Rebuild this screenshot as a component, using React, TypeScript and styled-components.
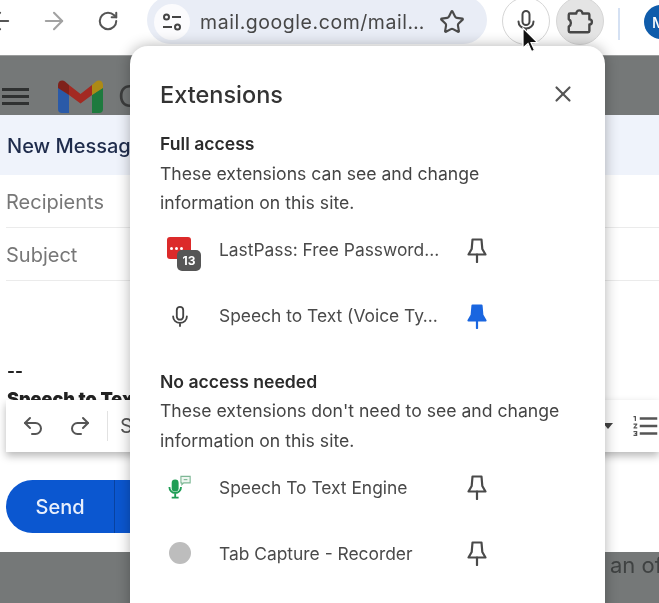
import React from 'react';
import styled, { createGlobalStyle } from 'styled-components';
import { ArrowLeft, ArrowRight, EllipsisVertical, Redo2, RotateCw, Star, Undo2, X } from 'lucide-react';
import { MdFormatListNumbered } from 'react-icons/md';

const GlobalStyle = createGlobalStyle`
    html, body {
        margin: 0;
        padding: 0;
        background: #fff;
    }

    body {
        font-family: Inter, "Liberation Sans", sans-serif;
        color: #444;
    }
`;

const Frame = styled.div`
    position: relative;
    display: flex;
    flex-direction: column;
    width: 659px;
    height: 603px;
    overflow: hidden;
    filter: blur(0.4px);
`;

const Toolbar = styled.header`
    display: flex;
    align-items: flex-start;
    flex: 0 0 56px;
    background: #fff;
    overflow: hidden;
`;

const NavButton = styled.span<{ $dim?: boolean; $width: number }>`
    display: flex;
    align-items: center;
    justify-content: center;
    flex: 0 0 ${(p) => p.$width}px;
    height: 42px;
    color: ${(p) => (p.$dim ? '#a2a2a2' : '#555')};
`;

const BackArrow = styled(ArrowLeft)`
    flex-shrink: 0;
    margin-left: -14px;
`;

const Omnibox = styled.div`
    display: flex;
    align-items: center;
    flex: 0 0 340px;
    height: 48px;
    margin-top: -4px;
    border-radius: 24px;
    background: #e9edf6;
`;

const TuneChip = styled.span`
    display: flex;
    align-items: center;
    justify-content: center;
    flex: 0 0 36px;
    height: 36px;
    margin: 4px 10px 0 7px;
    border-radius: 50%;
    background: #fbfbfd;
    color: #444;
`;

const Url = styled.span`
    flex: 1;
    margin-top: 4px;
    font-size: 19.5px;
    letter-spacing: 0.55px;
    color: #474747;
    white-space: nowrap;
`;

const StarSlot = styled.span`
    display: flex;
    margin: 4px 22px 0 0;
    color: #4a4a4a;
`;

const RoundAction = styled.span<{ $active?: boolean }>`
    display: flex;
    align-items: center;
    justify-content: center;
    flex: 0 0 48px;
    height: 48px;
    margin: -3px 0 0;
    border-radius: 50%;
    box-sizing: border-box;
    border: 1px solid #d6d6d6;
    background: ${(p) => (p.$active ? '#e4e4e4' : '#fff')};
    color: #474747;
`;

const ActionGap = styled.span<{ $width: number }>`
    flex: 0 0 ${(p) => p.$width}px;
`;

const ToolbarDivider = styled.span`
    flex: 0 0 2px;
    height: 32px;
    margin: 8px 24px 0 14px;
    background: #d5e1f3;
`;

const Avatar = styled.span`
    display: flex;
    align-items: center;
    padding-left: 8px;
    flex: 0 0 34px;
    height: 34px;
    margin-top: 5px;
    border-radius: 50%;
    background: #0f5cab;
    color: #fff;
    font-size: 15px;
    font-weight: 500;
    box-sizing: border-box;
`;

const PageScrim = styled.main`
    display: flex;
    flex-direction: column;
    flex: 1;
    background: #757878;
    border-top: 1px solid #9a9c9c;
    margin-top: -1px;
`;

const GmailBar = styled.div`
    display: flex;
    align-items: center;
    flex: 0 0 59px;
    padding-top: 21px;
    box-sizing: border-box;
    color: #333;
`;

const Burger = styled.span`
    display: flex;
    flex-direction: column;
    justify-content: space-between;
    width: 27px;
    height: 17px;
    margin: 0 29px 0 2px;

    i {
        display: block;
        height: 3px;
        background: #2f3131;
    }
`;

const SearchGlyph = styled.span`
    margin-left: 15px;
    font-size: 30px;
    color: #3b3c3c;
`;

const Compose = styled.section`
    display: flex;
    flex-direction: column;
    flex: 0 0 437px;
    background: #fff;
`;

const ComposeHeader = styled.div`
    display: flex;
    align-items: center;
    flex: 0 0 60px;
    padding: 2px 0 0 7px;
    box-sizing: border-box;
    background: #eff3fb;
    color: #1f2c4c;
    font-size: 20px;
    font-weight: 500;
    white-space: nowrap;
`;

const FieldRow = styled.div`
    display: flex;
    align-items: center;
    height: 53px;
    padding-top: 2px;
    margin-left: 6px;
    border-bottom: 1px solid #ebebeb;
    box-sizing: border-box;
    color: #777;
    font-size: 20px;
`;

const Signature = styled.div`
    flex: 0 0 119px;
    padding: 77px 0 0 7px;
    box-sizing: border-box;
    overflow: hidden;
    color: #222;
    font-size: 17px;
    font-weight: 700;
    line-height: 27px;
    white-space: nowrap;

    strong {
        display: block;
        font-size: 18px;
    }
`;

const FormatBar = styled.div`
    display: flex;
    align-items: center;
    flex: 0 0 52px;
    margin-left: 6px;
    padding-left: 3px;
    background: #fff;
    box-shadow: 0 4px 8px rgba(0, 0, 0, 0.28);
    color: #555;
`;

const FormatButton = styled.span`
    display: flex;
    justify-content: center;
    flex: 0 0 47px;
`;

const FormatDivider = styled.span`
    flex: 0 0 1px;
    height: 30px;
    margin: 0 12px 0 4px;
    background: #e2e2e2;
`;

const FontLabel = styled.span`
    flex: 0 0 483px;
    font-size: 20px;
    color: #555;
`;

const Caret = styled.span`
    flex: 0 0 0;
    height: 0;
    border-left: 5px solid transparent;
    border-right: 5px solid transparent;
    border-top: 6px solid #444;
    margin-right: 18px;
`;

const ListIcon = styled(MdFormatListNumbered)`
    flex-shrink: 0;
`;

const SendRow = styled.div`
    display: flex;
    flex: 1;
    align-items: flex-start;
    padding: 28px 0 0 6px;
`;

const SendButton = styled.button`
    display: flex;
    width: 200px;
    height: 53px;
    padding: 0;
    border: 0;
    border-radius: 27px;
    background: #0b57d0;
    color: #e8effc;
    font: 500 20px Inter, "Liberation Sans", sans-serif;
`;

const SendLabel = styled.span`
    display: flex;
    align-items: center;
    justify-content: center;
    flex: 0 0 108px;
    height: 100%;
    border-right: 1px solid #0842a0;
`;

const Footer = styled.div`
    flex: 1;
    padding: 0 0 0 610px;
    overflow: hidden;
    color: #3f4242;
    font-size: 22px;
    line-height: 26px;
    white-space: nowrap;
`;

const Popup = styled.aside`
    position: absolute;
    top: 46px;
    left: 130px;
    width: 475px;
    height: 580px;
    border-radius: 18px;
    background: #fff;
    box-shadow: 0 0 14px rgba(0, 0, 0, 0.3);
`;

const PopupHeader = styled.div`
    display: flex;
    align-items: center;
    justify-content: space-between;
    height: 32px;
    margin: 32px 29px 19px 30px;
`;

const PopupTitle = styled.h1`
    margin: 0;
    color: #333;
    font-size: 23.500px;
    font-weight: 500;
`;

const CloseButton = styled.span`
    display: flex;
    color: #555;
`;

const Section = styled.section`
    & + & {
        margin-top: 18px;
    }
`;

const SectionText = styled.div`
    margin-bottom: -1px;
    padding-left: 30px;
    font-size: 17.600px;
    line-height: 29.500px;
    color: #444;

    strong {
        display: block;
        color: #2b2b2b;
        font-weight: 600;
    }
`;

const ExtensionRow = styled.div`
    display: grid;
    grid-template-columns: 51px 246px 24px 24px;
    align-items: center;
    height: 66px;
    padding-left: 38px;
`;

const IconCell = styled.span`
    position: relative;
    display: flex;
    align-items: center;
    justify-content: center;
    width: 24px;
    height: 24px;
`;

const ExtensionName = styled.span`
    color: #4a4a4a;
    font-size: 17.400px;
    white-space: nowrap;
`;

const PinCell = styled.span`
    display: flex;
    justify-content: center;
`;

const MenuCell = styled.span`
    display: flex;
    justify-content: center;
    margin-left: 41px;
    color: #444;
`;

const LastPassTile = styled.span`
    display: flex;
    align-items: center;
    gap: 2px;
    flex: 0 0 24px;
    height: 22px;
    margin: -3px 0 0 -2px;
    padding-left: 3px;
    box-sizing: border-box;
    border-radius: 3px;
    background: #dc2a2a;

    i {
        width: 3px;
        height: 3px;
        border-radius: 50%;
        background: #fff;
    }
`;

const CountBadge = styled.span`
    position: absolute;
    top: 12px;
    left: 9px;
    width: 24px;
    height: 21px;
    border-radius: 5px;
    background: #565656;
    color: #fff;
    font-size: 12px;
    font-weight: 700;
    line-height: 21px;
    text-align: center;
`;

const GrayDot = styled.span`
    width: 22px;
    height: 22px;
    border-radius: 50%;
    background: #bdbdbd;
`;

const Pointer = styled.svg`
    position: absolute;
    top: 27px;
    left: 521px;
`;

const MicIcon = ({ size = 24 }: { size?: number }) => (
    <svg width={size} height={size} viewBox="0 0 24 24" fill="none" stroke="currentColor" strokeWidth="2">
        <rect x="8.500" y="2" width="7" height="14" rx="3.500" />
        <path d="M4.500 12.500c0 4.200 3.300 7 7.500 7s7.500-2.800 7.500-7M12 19.500V23" strokeLinecap="round" />
    </svg>
);

const TuneIcon = () => (
    <svg width="22" height="22" viewBox="0 0 22 22" fill="none" stroke="currentColor" strokeWidth="2">
        <circle cx="5.500" cy="6" r="2.500" />
        <path d="M11 6h9M2 16h9" />
        <circle cx="16.500" cy="16" r="2.500" />
    </svg>
);

const ExtensionIcon = () => (
    <svg width="30" height="30" viewBox="0 0 24 24" fill="none" stroke="currentColor" strokeWidth="1.900" strokeLinejoin="round">
        <path d="M4 6h5a2.500 2.500 0 0 1 5 0h4.500a1 1 0 0 1 1 1v3.700a2 2 0 0 1 0 4V20a1 1 0 0 1-1 1H4a1 1 0 0 1-1-1v-3.500a3.500 3.500 0 0 0 0-6V7a1 1 0 0 1 1-1z" />
    </svg>
);

const PinIcon = ({ filled }: { filled?: boolean }) => (
    <svg width="24" height="26" viewBox="0 0 24 26" fill={filled ? '#1a66e0' : 'none'} stroke={filled ? '#1a66e0' : '#4a4a4a'} strokeWidth="2.200" strokeLinejoin="round">
        <path d="M7.500 2.500h9l.8 9.500 3.200 5.500h-17l3.200-5.500z" />
        <path d="M12 17.500V25" strokeLinecap="round" />
    </svg>
);

const GmailLogo = () => (
    <svg width="45" height="33" viewBox="0 0 45 33">
        <path d="M0 7v22a4 4 0 0 0 4 4h7V15z" fill="#2a5aa8" />
        <path d="M34 33h7a4 4 0 0 0 4-4V7L34 15z" fill="#1e7a3e" />
        <path d="M34 15V5l4-3.500c2.500-1.800 7-1 7 3.500v3z" fill="#ad8a16" />
        <path d="M11 15V5l11.500 9L34 5v10L22.500 23.500z" fill="#a32a22" />
        <path d="M0 8V5c0-4.500 4.500-5.300 7-3.500L11 5v10z" fill="#7f211b" />
    </svg>
);

const SpeechEngineIcon = () => (
    <svg width="26" height="26" viewBox="0 0 26 26" fill="none">
        <rect x="4" y="5" width="7.500" height="13" rx="3.700" fill="#1f9d55" />
        <path d="M1.500 13c0 4 3 6.500 6.300 6.500s6.300-2.500 6.300-6.500M7.800 19.500V24M4 24.500h7.500" stroke="#1f9d55" strokeWidth="2" />
        <path d="M14 1.500h10v7h-7l-2 2v-2h-1z" fill="#eef6f0" stroke="#7db795" strokeWidth="1.200" />
        <path d="M17 5h4" stroke="#7db795" strokeWidth="1.200" />
    </svg>
);

interface Extension {
    name: string;
    icon: React.ReactNode;
    pinned?: boolean;
}

const fullAccess: Extension[] = [
    {
        name: 'LastPass: Free Password…',
        icon: (
            <>
                <LastPassTile>
                    <i />
                    <i />
                    <i />
                </LastPassTile>
                <CountBadge>13</CountBadge>
            </>
        ),
    },
    { name: 'Speech to Text (Voice Ty…', icon: <MicIcon size={22} />, pinned: true },
];

const noAccess: Extension[] = [
    { name: 'Speech To Text Engine', icon: <SpeechEngineIcon /> },
    { name: 'Tab Capture - Recorder', icon: <GrayDot /> },
];

const ExtensionList = ({ items }: { items: Extension[] }) => (
    <>
        {items.map((item) => (
            <ExtensionRow key={item.name}>
                <IconCell>{item.icon}</IconCell>
                <ExtensionName>{item.name}</ExtensionName>
                <PinCell>
                    <PinIcon filled={item.pinned} />
                </PinCell>
                <MenuCell>
                    <EllipsisVertical size={24} strokeWidth={2.400} />
                </MenuCell>
            </ExtensionRow>
        ))}
    </>
);

const App = () => (
    <Frame>
        <GlobalStyle />
        <Toolbar>
            <NavButton $width={0}>
                <BackArrow size={28} strokeWidth={1.800} />
            </NavButton>
            <ActionGap $width={20} />
            <NavButton $dim $width={40}>
                <ArrowRight size={28} strokeWidth={1.800} />
            </NavButton>
            <ActionGap $width={14} />
            <NavButton $width={40}>
                <RotateCw size={22} strokeWidth={2.200} />
            </NavButton>
            <ActionGap $width={19} />
            <Omnibox>
                <TuneChip>
                    <TuneIcon />
                </TuneChip>
                <Url>mail.google.com/mail…</Url>
                <StarSlot>
                    <Star size={26} strokeWidth={2} />
                </StarSlot>
            </Omnibox>
            <ActionGap $width={15} />
            <RoundAction>
                <MicIcon size={24} />
            </RoundAction>
            <ActionGap $width={6} />
            <RoundAction $active>
                <ExtensionIcon />
            </RoundAction>
            <ToolbarDivider />
            <Avatar>M</Avatar>
        </Toolbar>

        <PageScrim>
            <GmailBar>
                <Burger>
                    <i />
                    <i />
                    <i />
                </Burger>
                <GmailLogo />
                <SearchGlyph>C</SearchGlyph>
            </GmailBar>

            <Compose>
                <ComposeHeader>New Message</ComposeHeader>
                <FieldRow>Recipients</FieldRow>
                <FieldRow>Subject</FieldRow>
                <Signature>
                    --
                    <strong>Speech to Text</strong>
                </Signature>
                <FormatBar>
                    <FormatButton>
                        <Undo2 size={24} strokeWidth={2} />
                    </FormatButton>
                    <FormatButton>
                        <Redo2 size={24} strokeWidth={2} />
                    </FormatButton>
                    <FormatDivider />
                    <FontLabel>S</FontLabel>
                    <Caret />
                    <ListIcon size={30} />
                </FormatBar>
                <SendRow>
                    <SendButton>
                        <SendLabel>Send</SendLabel>
                    </SendButton>
                </SendRow>
            </Compose>

            <Footer>an of</Footer>
        </PageScrim>

        <Popup>
            <PopupHeader>
                <PopupTitle>Extensions</PopupTitle>
                <CloseButton>
                    <X size={26} strokeWidth={2} />
                </CloseButton>
            </PopupHeader>
            <Section>
                <SectionText>
                    <strong>Full access</strong>
                    These extensions can see and change
                    <br />
                    information on this site.
                </SectionText>
                <ExtensionList items={fullAccess} />
            </Section>
            <Section>
                <SectionText>
                    <strong>No access needed</strong>
                    These extensions don't need to see and change
                    <br />
                    information on this site.
                </SectionText>
                <ExtensionList items={noAccess} />
            </Section>
        </Popup>

        <Pointer width="18" height="27" viewBox="0 0 18 27">
            <path d="M2 1v20l5-4.500 3.500 8 3-1.300-3.500-7.700h6.500z" fill="#111" stroke="#fff" strokeWidth="1.200" />
        </Pointer>
    </Frame>
);

export default App;
